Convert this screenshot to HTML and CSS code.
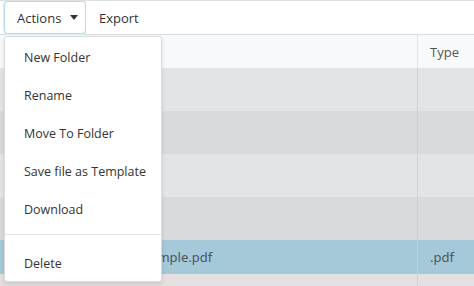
FILE: index.html
```html
<!DOCTYPE html>
<html>
<head>
<meta charset="utf-8">
<link rel="stylesheet" href="styles.css">
</head>
<body>
<div class="page">
  <div class="toolbar">
    <button class="btn btn-active">Actions <span class="caret"></span></button>
    <button class="btn">Export</button>
  </div>
  <div class="grid">
    <div class="row head"><div class="c1"></div><div class="c2">Type</div></div>
    <div class="row r1"><div class="c1"></div><div class="c2"></div></div>
    <div class="row r2"><div class="c1"></div><div class="c2"></div></div>
    <div class="row r1"><div class="c1"></div><div class="c2"></div></div>
    <div class="row r2"><div class="c1"></div><div class="c2"></div></div>
    <div class="row sel"><div class="c1 name">Sample.pdf</div><div class="c2 name">.pdf</div></div>
    <div class="row last"><div class="c1"></div><div class="c2"></div></div>
  </div>
  <div class="menu">
    <div class="item">New Folder</div>
    <div class="item">Rename</div>
    <div class="item">Move To Folder</div>
    <div class="item">Save file as Template</div>
    <div class="item">Download</div>
    <div class="divider"></div>
    <div class="item">Delete</div>
  </div>
</div>
</body>
</html>
```
FILE: styles.css
```css
html, body {
  margin: 0;
  padding: 0;
  background: #fff;
}
.page {
  position: relative;
  width: 474px;
  height: 286px;
  overflow: hidden;
  font-family: "Open Sans", "Noto Sans", sans-serif;
  color: #333;
  border-top: 1px solid #dedede;
  box-sizing: border-box;
}
.toolbar {
  display: flex;
  align-items: stretch;
  height: 33px;
  border-bottom: 1px solid #dcdcdc;
  padding-left: 4px;
}
.btn {
  font-family: inherit;
  font-size: 13px;
  color: #333;
  background: #fff;
  border: 1px solid transparent;
  border-radius: 4px;
  padding: 0 11px 0 12px;
  display: flex;
  align-items: center;
  cursor: pointer;
}
.btn-active {
  border: 1px solid #b8dbe8;
  box-shadow: 0 0 0 1px #d9edf5;
  width: 82px;
  padding-left: 12px;
}
.caret {
  display: inline-block;
  width: 0;
  height: 0;
  margin-left: 9px;
  border-left: 4px solid transparent;
  border-right: 4px solid transparent;
  border-top: 5px solid #333;
}
.grid {
  display: flex;
  flex-direction: column;
}
.row {
  display: flex;
  height: 43px;
}
.row .c1 {
  flex: 1;
  border-right: 1px solid #cfd1d4;
}
.row .c2 {
  width: 56px;
  font-size: 13px;
  display: flex;
  align-items: center;
  padding-left: 12px;
  box-sizing: border-box;
}
.head {
  height: 33px;
  background: #f8f9fa;
  color: #555;
}
.head .c1 { border-right-color: #e2e3e5; }
.r1 { background: #e3e4e6; }
.r2 { background: #d9dadc; }
.sel {
  height: 34px;
  background: #a5c9d8;
}
.sel .c1 { border-right-color: #b7d3de; }
.name {
  font-size: 13px;
  color: #4a5560;
  display: flex;
  align-items: center;
  font-family: "Noto Sans", "Open Sans", sans-serif;
}
.sel .c1.name { padding-left: 143px; }
.last { background: #e4e0e1; }
.menu {
  position: absolute;
  left: 4px;
  top: 35px;
  width: 158px;
  height: 246px;
  background: #fff;
  border: 1px solid #dcdcdc;
  border-radius: 3px;
  box-shadow: 0 2px 4px rgba(0,0,0,0.12);
  box-sizing: border-box;
  padding-top: 1px;
  font-size: 12.5px;
  color: #333;
}
.item {
  height: 38px;
  display: flex;
  align-items: center;
  padding-left: 19px;
}
.divider {
  height: 1px;
  background: #e5e5e5;
  margin: 6px 0 9px;
}
```
